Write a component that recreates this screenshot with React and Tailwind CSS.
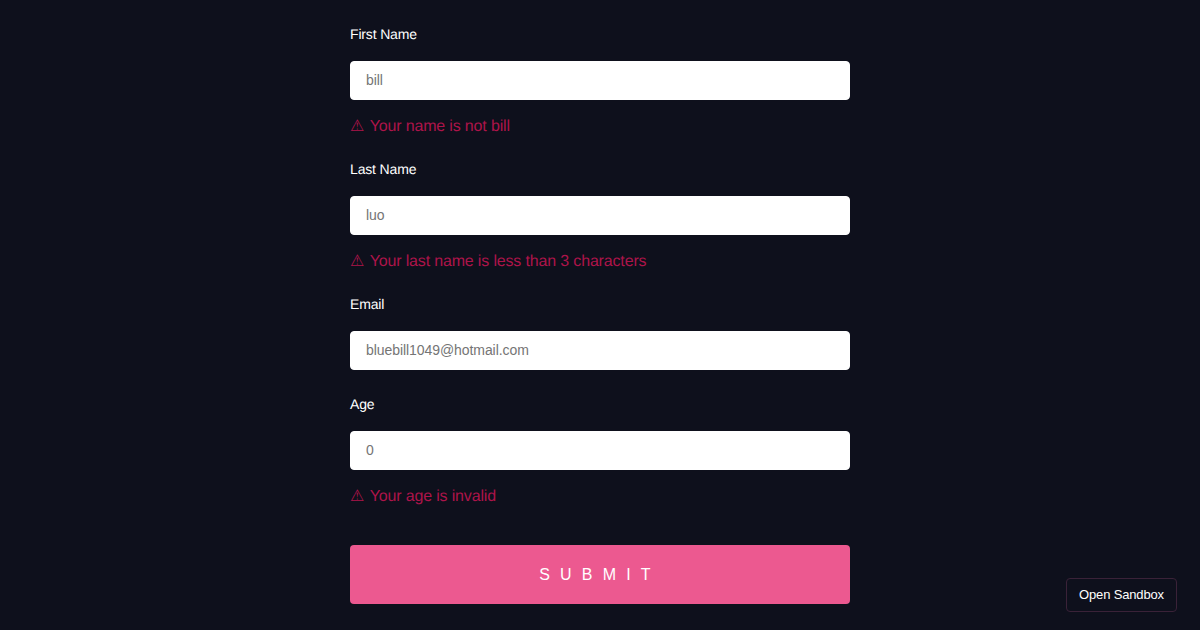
import { useState } from "react";

const inputClass =
  "block w-full h-[39px] box-border rounded border border-white bg-white px-[15px] pb-[2px] text-[14px] tracking-[-0.005em] text-black outline-none placeholder:text-[#757575]";

function Field({ label, placeholder, error, type = "text" }) {
  const [value, setValue] = useState("");

  return (
    <div>
      <label className="block mt-5 mb-[13px] text-[14px] leading-7 text-white">
        {label}
      </label>
      <input
        type={type}
        value={value}
        placeholder={placeholder}
        onChange={(e) => setValue(e.target.value)}
        className={inputClass}
      />
      {error && (
        <p className="mt-[18px] h-[17px] text-[16px] leading-[18px] text-[#ad144a]">
          <span className="mr-[1.5px]">⚠</span> {error}
        </p>
      )}
    </div>
  );
}

export default function App() {
  return (
    <div className="h-screen overflow-hidden bg-[#0e101c] font-['Liberation_Sans',Arial,sans-serif] tracking-[-0.01em] [text-rendering:geometricPrecision] antialiased">
      <form
        className="mx-auto w-[500px]"
        onSubmit={(e) => e.preventDefault()}
      >
        <Field label="First Name" placeholder="bill" error="Your name is not bill" />
        <Field
          label="Last Name"
          placeholder="luo"
          error="Your last name is less than 3 characters"
        />
        <Field label="Email" placeholder="bluebill1049@hotmail.com" />
        <Field label="Age" placeholder="0" error="Your age is invalid" />
        <button
          type="submit"
          className="mt-10 block w-full h-[59px] rounded bg-[#ec5990] text-[16px] font-thin uppercase tracking-[10.2px] text-white"
        >
          Submit
        </button>
      </form>

      {/* floating link, sits over the page */}
      <button className="fixed right-[23px] bottom-[18px] h-[34px] w-[111px] rounded border border-[#3a2238] bg-[#0e101c] text-[13px] text-white">
        Open Sandbox
      </button>
    </div>
  );
}
